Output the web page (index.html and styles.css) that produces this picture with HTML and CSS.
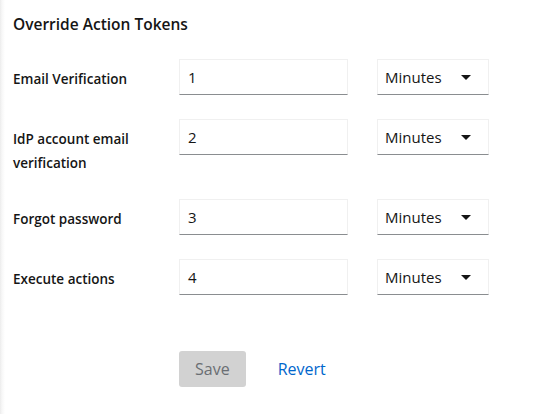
FILE: index.html
```html
<!DOCTYPE html>
<html lang="en">
<head>
<meta charset="utf-8">
<title>Override Action Tokens</title>
<link rel="stylesheet" href="styles.css">
</head>
<body>
<main class="page">
  <h2 class="title">Override Action Tokens</h2>
  <form class="form">
    <div class="row">
      <label class="label" for="t1">Email Verification</label>
      <div class="controls">
        <div class="input" id="t1">1</div>
        <div class="select"><span>Minutes</span><span class="caret"></span></div>
      </div>
    </div>
    <div class="row">
      <label class="label" for="t2">IdP account email verification</label>
      <div class="controls">
        <div class="input" id="t2">2</div>
        <div class="select"><span>Minutes</span><span class="caret"></span></div>
      </div>
    </div>
    <div class="row">
      <label class="label" for="t3">Forgot password</label>
      <div class="controls">
        <div class="input" id="t3">3</div>
        <div class="select"><span>Minutes</span><span class="caret"></span></div>
      </div>
    </div>
    <div class="row">
      <label class="label" for="t4">Execute actions</label>
      <div class="controls">
        <div class="input" id="t4">4</div>
        <div class="select"><span>Minutes</span><span class="caret"></span></div>
      </div>
    </div>
    <div class="actions">
      <span class="btn btn-disabled">Save</span>
      <span class="btn btn-link">Revert</span>
    </div>
  </form>
</main>
</body>
</html>
```
FILE: styles.css
```css
html, body {
  margin: 0;
  padding: 0;
  background: #fff;
}
body {
  font-family: "Open Sans", "Noto Sans", sans-serif;
  color: #151515;
  width: 551px;
  height: 414px;
  background: linear-gradient(to right, #ececec 0, #f7f7f7 2px, #fff 5px);
}
.page {
  padding: 12px 13px 0 13px;
}
.title {
  margin: 0 0 23px 0;
  font-size: 15.5px;
  font-weight: 600;
  line-height: 24px;
}
.form {
  display: flex;
  flex-direction: column;
  gap: 24px;
}
.row {
  display: grid;
  grid-template-columns: 150px 1fr;
  column-gap: 16px;
  align-items: start;
}
.label {
  padding-top: 8px;
  font-size: 13.5px;
  font-weight: 600;
  line-height: 24px;
}
.controls {
  display: flex;
  gap: 29px;
}
.input, .select {
  box-sizing: border-box;
  height: 36px;
  border: 1px solid #f0f0f0;
  border-bottom-color: #8a8d90;
  font-size: 15px;
  line-height: 34px;
  padding: 0 8px;
}
.input {
  width: 169px;
}
.select {
  width: 112px;
  display: flex;
  align-items: center;
  justify-content: space-between;
  padding: 0 17px 0 7px;
}
.caret {
  width: 0;
  height: 0;
  border-left: 5px solid transparent;
  border-right: 5px solid transparent;
  border-top: 5px solid #151515;
}
.actions {
  display: flex;
  gap: 16px;
  margin-top: 32px;
  padding-left: 166px;
}
.btn {
  box-sizing: border-box;
  height: 36px;
  padding: 0 16px;
  line-height: 36px;
  font-size: 16px;
  border-radius: 3px;
}
.btn-disabled {
  background: #d2d2d2;
  color: #6a6e73;
}
.btn-link {
  color: #0066cc;
}
```
